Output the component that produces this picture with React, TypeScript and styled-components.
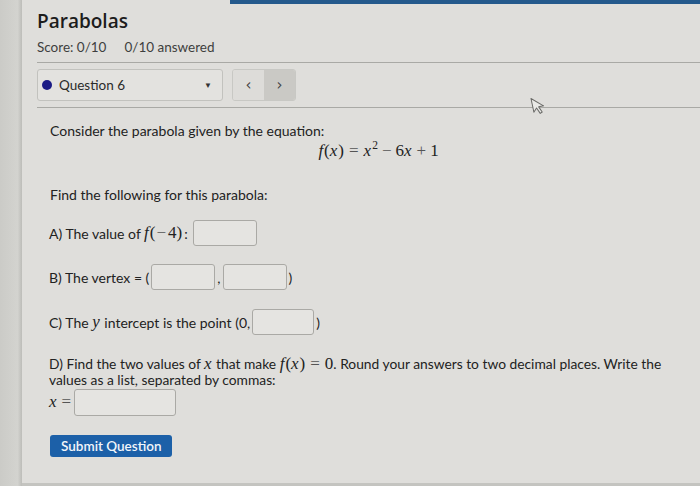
import styled, { createGlobalStyle } from "styled-components";

const GlobalStyle = createGlobalStyle`
  html, body {
    margin: 0;
    padding: 0;
    background: #cfcfcb;
  }
  body {
    font-family: "Lato", "Open Sans", sans-serif;
    color: #222;
  }
`;

function MathVar({ children }: { children: string }) {
  return <Var>{children}</Var>;
}

function Fx({ arg }: { arg: React.ReactNode }) {
  return (
    <MathText>
      <MathVar>f</MathVar>({arg})
    </MathText>
  );
}

function Cursor() {
  return (
    <CursorWrap>
      <svg width="14" height="20" viewBox="0 0 14 20">
        <path
          d="M1 1 L1 15 L4.5 11.5 L7 17.5 L9.2 16.6 L6.8 10.8 L11.8 10.8 Z"
          fill="#e9e9e6"
          stroke="#6b6b68"
          strokeWidth="1"
          strokeLinejoin="round"
        />
      </svg>
    </CursorWrap>
  );
}

export default function App() {
  return (
    <>
      <GlobalStyle />
      <Page>
        <Gutter />
        <Panel>
          <TopBar />
          <Header>
            <Title>Parabolas</Title>
            <ScoreLine>
              <span>Score: 0/10</span>
              <span>0/10 answered</span>
            </ScoreLine>
          </Header>
          <Divider />
          <QuestionNav>
            <QuestionSelect>
              <Dot />
              <QuestionLabel>Question 6</QuestionLabel>
              <Caret>▼</Caret>
            </QuestionSelect>
            <NavGroup>
              <NavButton>‹</NavButton>
              <NavButton $active>›</NavButton>
            </NavGroup>
          </QuestionNav>
          <Divider />

          <Content>
            <Intro>Consider the parabola given by the equation:</Intro>
            <Equation>
              <MathText>
                <MathVar>f</MathVar>(<MathVar>x</MathVar>)<Rel>=</Rel>
                <MathVar>x</MathVar>
                <Sup>2</Sup>
                <Bin>−</Bin>6<MathVar>x</MathVar>
                <Bin>+</Bin>1
              </MathText>
            </Equation>

            <Prompt>Find the following for this parabola:</Prompt>

            <AnswerRow $top={16}>
              <span>A) The value of </span>
              <Fx arg={<><NegSign>−</NegSign>4</>} />
              <Colon>:</Colon>
              <AnswerBox $width={64} />
            </AnswerRow>

            <AnswerRow $top={18}>
              <span>B) The vertex = (</span>
              <AnswerBox $width={64} />
              <span>,</span>
              <AnswerBox $width={64} />
              <span>)</span>
            </AnswerRow>

            <AnswerRow $top={19}>
              <span>C) The </span>
              <MathText>
                <MathVar>y</MathVar>
              </MathText>
              <span> intercept is the point (0,</span>
              <AnswerBox $width={62} />
              <span>)</span>
            </AnswerRow>

            <Paragraph>
              D) Find the two values of{" "}
              <MathText>
                <MathVar>x</MathVar>
              </MathText>{" "}
              that make <Fx arg={<MathVar>x</MathVar>} />
              <MathText>
                <Rel>=</Rel>0
              </MathText>
              . Round your answers to two decimal places. Write the values as a
              list, separated by commas:
            </Paragraph>

            <AnswerRow $top={1}>
              <MathText>
                <MathVar>x</MathVar>
                <Rel $tight>=</Rel>
              </MathText>
              <AnswerBox $width={102} $height={27} />
            </AnswerRow>

            <SubmitButton type="button">Submit Question</SubmitButton>
          </Content>
          <Cursor />
        </Panel>
      </Page>
    </>
  );
}

const Page = styled.div`
  display: flex;
  width: 700px;
  height: 486px;
  overflow: hidden;
  background: #cfcfcb;
`;

const Gutter = styled.div`
  width: 22px;
  flex-shrink: 0;
  background: linear-gradient(90deg, #cbcbc7 0%, #d3d3cf 80%, #bdbdb9 100%);
`;

const Panel = styled.div`
  position: relative;
  flex: 1;
  display: flex;
  flex-direction: column;
  background: #dfdedb;
  border-bottom: 3px solid #c4c4c0;
  box-sizing: border-box;
  overflow: hidden;
`;

const TopBar = styled.div`
  height: 4px;
  margin-left: 208px;
  background: #24598c;
  flex-shrink: 0;
`;

const Header = styled.div`
  padding: 5px 0 0 15px;
`;

const Title = styled.h1`
  margin: 0;
  font-family: "Open Sans", "Lato", sans-serif;
  font-size: 19px;
  line-height: 24px;
  font-weight: 600;
  color: #1c1c1c;
`;

const ScoreLine = styled.div`
  display: flex;
  gap: 18px;
  margin-top: 5px;
  font-size: 13.5px;
  line-height: 18px;
  color: #3e3e3e;
`;

const Divider = styled.hr`
  margin: 6px 0 0 15px;
  border: none;
  border-top: 1px solid #a9a9a5;
  height: 0;
`;

const QuestionNav = styled.div`
  display: flex;
  gap: 9px;
  margin: 6px 0 0 15px;
`;

const QuestionSelect = styled.div`
  display: flex;
  align-items: center;
  width: 186px;
  height: 32px;
  box-sizing: border-box;
  padding: 0 10px 0 4px;
  border: 1px solid #c2c2be;
  border-radius: 3px;
  background: #e3e2df;
`;

const Dot = styled.span`
  width: 10px;
  height: 10px;
  border-radius: 50%;
  background: #1b1b85;
  flex-shrink: 0;
`;

const QuestionLabel = styled.span`
  margin-left: 7px;
  flex: 1;
  font-size: 13.5px;
  color: #2a2a2a;
`;

const Caret = styled.span`
  font-size: 8px;
  color: #333;
`;

const NavGroup = styled.div`
  display: flex;
  height: 32px;
  border: 1px solid #c8c8c4;
  border-radius: 3px;
  overflow: hidden;
  box-sizing: border-box;
`;

const NavButton = styled.div<{ $active?: boolean }>`
  width: 31px;
  display: flex;
  align-items: center;
  justify-content: center;
  background: ${({ $active }) => ($active ? "#cac9c5" : "#dddcd9")};
  font-family: "DejaVu Sans", sans-serif;
  font-size: 15px;
  color: #444;
`;

const Content = styled.div`
  display: flex;
  flex-direction: column;
  align-items: flex-start;
  padding: 14px 0 0 27px;
  font-size: 14px;
`;

const Intro = styled.div`
  line-height: 18px;
  padding-left: 1px;
`;

const Equation = styled.div`
  align-self: stretch;
  text-align: center;
  line-height: 18px;
  margin-top: 2px;
  padding-left: 8px;
`;

const Prompt = styled.div`
  margin-top: 26px;
  line-height: 18px;
  padding-left: 1px;
`;

const AnswerRow = styled.div<{ $top: number }>`
  display: flex;
  align-items: center;
  margin-top: ${({ $top }) => $top}px;
  white-space: pre;
`;

const AnswerBox = styled.span<{ $width: number; $height?: number }>`
  display: inline-block;
  width: ${({ $width }) => $width}px;
  height: ${({ $height }) => $height ?? 26}px;
  margin: 0 2px;
  box-sizing: border-box;
  border: 1px solid #aaa9a5;
  border-radius: 3px;
  background: #e5e4e1;
`;

const Paragraph = styled.p`
  margin: 21px 0 0;
  line-height: 15.5px;
  font-size: 13.8px;
  width: 652px;
`;

const MathText = styled.span`
  font-family: "Liberation Serif", "DejaVu Serif", serif;
  font-size: 17px;
  line-height: 16px;
  white-space: nowrap;
`;

const Var = styled.i`
  font-style: italic;
  margin-right: 1px;
`;

const Rel = styled.span<{ $tight?: boolean }>`
  margin: ${({ $tight }) => ($tight ? "0 1px 0 4px" : "0 5px")};
  color: #555;
`;

const Bin = styled.span`
  margin: 0 4px;
  color: #555;
`;

const NegSign = styled.span`
  margin: 0 2px 0 1px;
  color: #555;
`;

const Colon = styled.span`
  margin: 0 3px 0 2px;
`;

const Sup = styled.sup`
  font-size: 11.5px;
  line-height: 0;
`;

const SubmitButton = styled.button`
  margin-top: 19px;
  margin-left: 1px;
  height: 22px;
  padding: 0 11px;
  border: none;
  border-radius: 3px;
  background: #1c60a8;
  color: #f2f5fa;
  font-family: "Lato", "Open Sans", sans-serif;
  font-size: 13.5px;
  font-weight: 600;
`;

const CursorWrap = styled.div`
  position: absolute;
  left: 510px;
  top: 96px;
  transform: rotate(-12deg);
`;
